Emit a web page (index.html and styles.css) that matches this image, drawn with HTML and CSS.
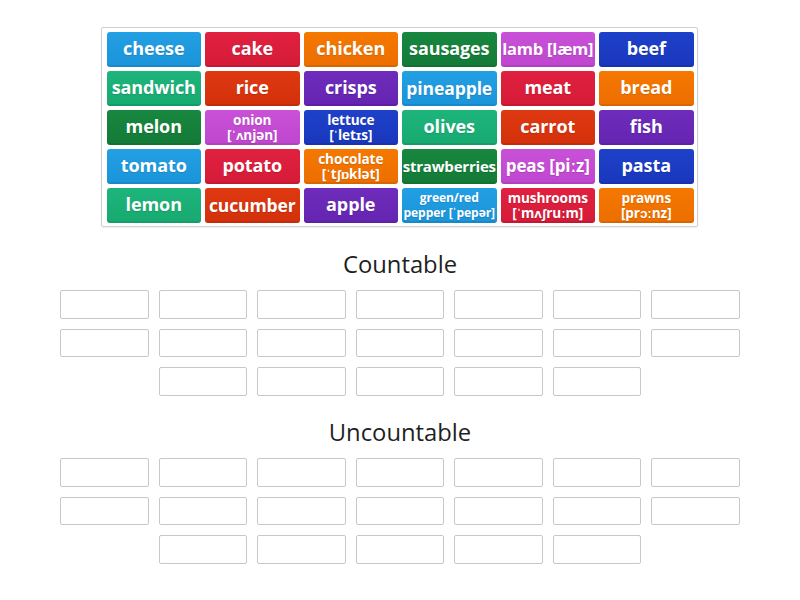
FILE: index.html
```html
<!DOCTYPE html>
<html lang="en">
<head>
<meta charset="utf-8">
<title>Countable / Uncountable</title>
<link rel="stylesheet" href="styles.css">
</head>
<body>
<main class="page">
  <section class="bank">
    <div class="tile c-blue">cheese</div>
    <div class="tile c-red">cake</div>
    <div class="tile c-orange">chicken</div>
    <div class="tile c-dkgreen">sausages</div>
    <div class="tile c-magenta t-md">lamb [læm]</div>
    <div class="tile c-dkblue">beef</div>

    <div class="tile c-green">sandwich</div>
    <div class="tile c-redorange">rice</div>
    <div class="tile c-purple">crisps</div>
    <div class="tile c-blue t-lg">pineapple</div>
    <div class="tile c-red">meat</div>
    <div class="tile c-orange">bread</div>

    <div class="tile c-dkgreen">melon</div>
    <div class="tile c-magenta t-sm">onion<br>[ˈʌnjən]</div>
    <div class="tile c-dkblue t-sm">lettuce<br>[ˈletɪs]</div>
    <div class="tile c-green">olives</div>
    <div class="tile c-redorange">carrot</div>
    <div class="tile c-purple">fish</div>

    <div class="tile c-blue">tomato</div>
    <div class="tile c-red">potato</div>
    <div class="tile c-orange t-sm">chocolate<br>[ˈtʃɒklət]</div>
    <div class="tile c-dkgreen t-md2">strawberries</div>
    <div class="tile c-magenta t-lg2">peas [piːz]</div>
    <div class="tile c-dkblue">pasta</div>

    <div class="tile c-green">lemon</div>
    <div class="tile c-redorange t-lg">cucumber</div>
    <div class="tile c-purple">apple</div>
    <div class="tile c-blue t-xs">green/red<br>pepper [ˈpepər]</div>
    <div class="tile c-red t-sm">mushrooms<br>[ˈmʌʃruːm]</div>
    <div class="tile c-orange t-sm">prawns<br>[prɔːnz]</div>
  </section>

  <section class="group">
    <h2 class="group-title">Countable</h2>
    <div class="slots">
      <div class="slot"></div><div class="slot"></div><div class="slot"></div><div class="slot"></div><div class="slot"></div><div class="slot"></div><div class="slot"></div>
      <div class="slot"></div><div class="slot"></div><div class="slot"></div><div class="slot"></div><div class="slot"></div><div class="slot"></div><div class="slot"></div>
      <div class="slot"></div><div class="slot"></div><div class="slot"></div><div class="slot"></div><div class="slot"></div>
    </div>
  </section>

  <section class="group">
    <h2 class="group-title">Uncountable</h2>
    <div class="slots">
      <div class="slot"></div><div class="slot"></div><div class="slot"></div><div class="slot"></div><div class="slot"></div><div class="slot"></div><div class="slot"></div>
      <div class="slot"></div><div class="slot"></div><div class="slot"></div><div class="slot"></div><div class="slot"></div><div class="slot"></div><div class="slot"></div>
      <div class="slot"></div><div class="slot"></div><div class="slot"></div><div class="slot"></div><div class="slot"></div>
    </div>
  </section>
</main>
</body>
</html>
```

FILE: styles.css
```css
html, body {
  margin: 0;
  padding: 0;
  background: #ffffff;
}

body {
  font-family: "Open Sans", "Liberation Sans", sans-serif;
  width: 800px;
  height: 600px;
  overflow: hidden;
}

.page {
  display: flex;
  flex-direction: column;
  align-items: center;
  padding-top: 27px;
}

.bank {
  display: grid;
  grid-template-columns: repeat(6, 94.5px);
  grid-auto-rows: 35px;
  column-gap: 4px;
  row-gap: 4px;
  padding: 3.5px 3.5px 3.5px 4.5px;
  border: 1px solid #d0d0d0;
  border-radius: 2px;
  box-shadow: 0 1px 2px rgba(0, 0, 0, 0.08);
  margin-left: -1px;
}

.tile {
  display: flex;
  align-items: center;
  justify-content: center;
  text-align: center;
  color: #ffffff;
  font-weight: 700;
  font-size: 18px;
  line-height: 1.2;
  border-radius: 3px;
  white-space: nowrap;
  letter-spacing: -0.1px;
  box-shadow: inset 0 -2px 0 rgba(0, 0, 0, 0.08);
  text-shadow: 0 1px 1px rgba(0, 0, 0, 0.12);
}

.t-lg { font-size: 17.5px; }
.t-lg2 { font-size: 17px; }
.t-md { font-size: 16.5px; letter-spacing: -0.2px; }
.t-md2 { font-size: 15px; letter-spacing: -0.2px; }
.t-sm { font-size: 13.6px; line-height: 15px; }
.t-xs { font-size: 12.1px; line-height: 15px; letter-spacing: -0.1px; }

.c-blue { background: linear-gradient(#239fe4, #1b94d9); }
.c-red { background: linear-gradient(#e0213f, #d51b37); }
.c-orange { background: linear-gradient(#f57800, #ec6e00); }
.c-dkgreen { background: linear-gradient(#18873f, #137a37); }
.c-magenta { background: linear-gradient(#c951d8, #bf47cf); }
.c-dkblue { background: linear-gradient(#1e41c9, #1937bc); }
.c-green { background: linear-gradient(#1db57c, #17a970); }
.c-redorange { background: linear-gradient(#de3911, #d3300b); }
.c-purple { background: linear-gradient(#6f2cbc, #6424b0); }

.group {
  display: flex;
  flex-direction: column;
  align-items: center;
  margin-top: 22px;
}

.group + .group {
  margin-top: 21px;
}

.group-title {
  margin: 0;
  font-weight: 400;
  font-size: 23.8px;
  line-height: 30px;
  color: #1f1f1f;
}

.slots {
  margin-top: 11px;
  width: 680px;
  display: flex;
  flex-wrap: wrap;
  justify-content: center;
  column-gap: 10px;
  row-gap: 10px;
}

.slot {
  box-sizing: border-box;
  width: 88.5px;
  height: 28.7px;
  border: 1px solid #c8c8c8;
  border-radius: 2px;
  background: #ffffff;
}
```
